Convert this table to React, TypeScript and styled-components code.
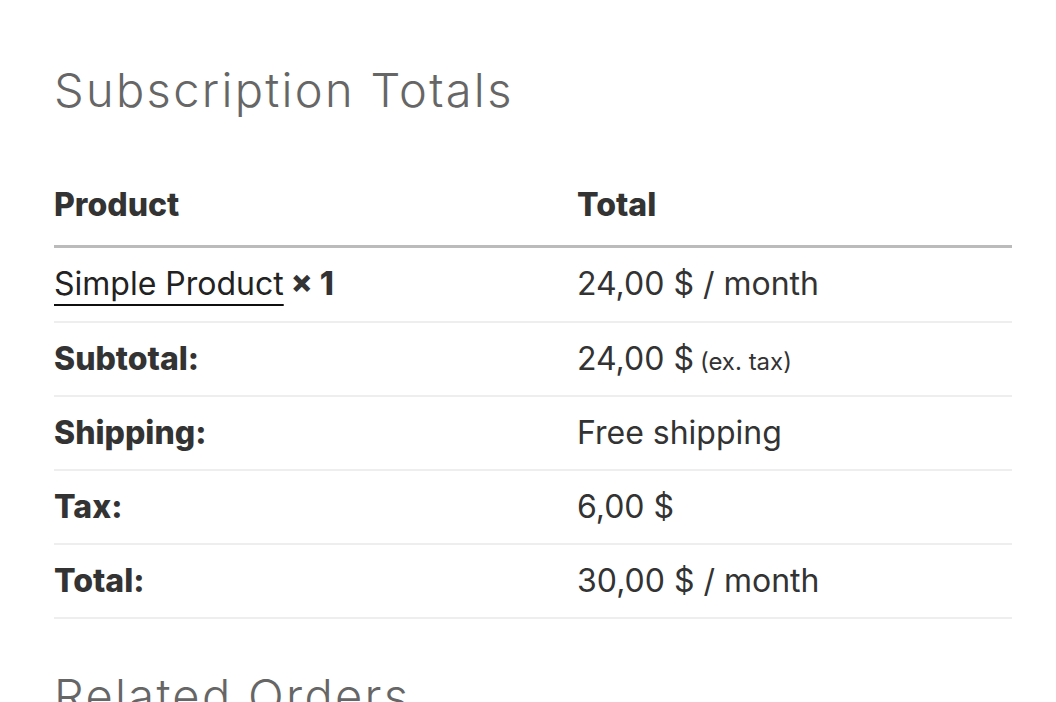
import React from "react";
import styled, { createGlobalStyle } from "styled-components";

const GlobalStyle = createGlobalStyle`
  html, body {
    margin: 0;
    padding: 0;
    background: #ffffff;
    overflow: hidden;
  }
  body {
    font-family: "Inter", "Noto Sans", "Liberation Sans", sans-serif;
    color: #333333;
  }
`;

const Page = styled.div`
  height: 702px;
  overflow: hidden;
  padding: 0 44px 0 54px;
  box-sizing: border-box;
`;

const SectionTitle = styled.h2<{ $top: number }>`
  margin: ${(p) => p.$top}px 0 0;
  font-size: 47px;
  line-height: 1.2;
  font-weight: 300;
  color: #666666;
  letter-spacing: 2.3px;
  white-space: nowrap;
`;

const Table = styled.div`
  margin-top: 60px;
  width: 958px;
`;

const HeadRow = styled.div`
  display: grid;
  grid-template-columns: 523px 1fr;
  border-bottom: 3px solid #bbbbbb;
  padding-bottom: 13px;
`;

const HeadCell = styled.div`
  font-size: 32px;
  line-height: 1.66;
  font-weight: 800;
  color: #333333;
`;

const Row = styled.div<{ $first?: boolean }>`
  display: grid;
  grid-template-columns: 523px 1fr;
  align-items: center;
  min-height: ${(p) => (p.$first ? 73 : 72)}px;
  border-bottom: 2px solid #eeeeee;
`;

const Cell = styled.div<{ $bold?: boolean }>`
  font-size: 32px;
  line-height: 1.66;
  font-weight: ${(p) => (p.$bold ? 800 : 400)};
  color: #333333;
  white-space: nowrap;
`;

const ProductLink = styled.a`
  color: #222222;
  text-decoration: underline;
  text-decoration-thickness: 2px;
  text-underline-offset: 9px;
  text-decoration-color: #0f0f0f;
`;

const Qty = styled.strong`
  font-weight: 800;
  margin-left: 7px;
`;

const TaxLabel = styled.small`
  font-size: 24px;
  margin-left: 6px;
`;

const rows: { label: string; value: React.ReactNode }[] = [
  { label: "Subtotal:", value: <>24,00&nbsp;$<TaxLabel>(ex. tax)</TaxLabel></> },
  { label: "Shipping:", value: "Free shipping" },
  { label: "Tax:", value: "6,00\u00a0$" },
  { label: "Total:", value: "30,00\u00a0$ / month" },
];

export default function App() {
  return (
    <>
      <GlobalStyle />
      <Page>
        <SectionTitle $top={62}>Subscription Totals</SectionTitle>
        <Table>
          <HeadRow>
            <HeadCell>Product</HeadCell>
            <HeadCell>Total</HeadCell>
          </HeadRow>
          <Row $first>
            <Cell>
              <ProductLink href="#">Simple Product</ProductLink>
              <Qty>×&nbsp;1</Qty>
            </Cell>
            <Cell>24,00&nbsp;$ / month</Cell>
          </Row>
          {rows.map((r) => (
            <Row key={r.label}>
              <Cell $bold>{r.label}</Cell>
              <Cell>{r.value}</Cell>
            </Row>
          ))}
        </Table>
        <SectionTitle $top={49}>Related Orders</SectionTitle>
      </Page>
    </>
  );
}
